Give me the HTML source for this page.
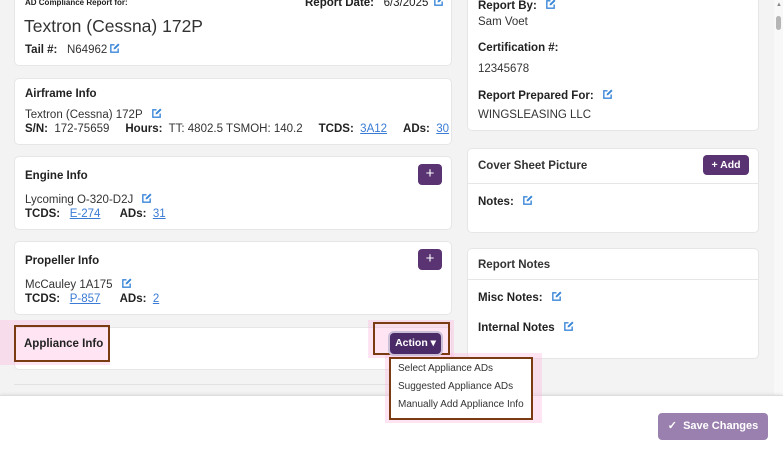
<!DOCTYPE html>
<html><head><meta charset="utf-8"><style>
*{box-sizing:border-box;margin:0;padding:0}
body{width:783px;height:454px;overflow:hidden;background:#f3f3f3;font-family:"Liberation Sans",sans-serif;color:#222;position:relative;font-size:11.5px}
.a{position:absolute}
.card{position:absolute;background:#fff;border-radius:5px;border:1px solid #e6e6e6}
.b{font-weight:bold;color:#222}
.t{color:#333}
.lnk{color:#3a7bd5;text-decoration:underline}
.ed{display:inline-block;width:11px;height:11px;vertical-align:-1px;margin-left:5px}
.plus{position:absolute;width:24px;height:21px;background:#5a3372;border-radius:4px;color:#fff;font-size:15px;text-align:center;line-height:20px}
.hl{position:absolute;background:rgba(255,180,220,0.35);z-index:5}
.bx{position:absolute;border:2px solid #7a3a12;z-index:6}
.z{z-index:7}
</style></head><body>
<svg width="0" height="0" style="position:absolute"><defs><symbol id="e" viewBox="0 0 12 12"><path d="M6 2H2v8h8V6" fill="none" stroke="#3a86d8" stroke-width="1.5"/><path d="M5 7l.3-1.8L10 .5l1.5 1.5L6.8 6.7z" fill="#3a86d8"/></symbol></defs></svg>

<div class="card" style="left:14px;top:-10px;width:438px;height:76px">
<div class="a b" style="left:10px;top:7px;font-size:8px">AD Compliance Report for:</div>
<div class="a b" style="left:290px;top:5px;font-size:11.5px">Report Date:&nbsp;&nbsp;&nbsp;<span style="font-weight:normal">6/3/2025</span><svg class="ed"><use href="#e"/></svg></div>
<div class="a" style="left:9px;top:25px;font-size:17.5px;color:#333">Textron (Cessna) 172P</div>
<div class="a" style="left:10px;top:52px"><span class="b">Tail #:</span>&nbsp;&nbsp; <span class="t">N64962</span><svg class="ed" style="margin-left:2px"><use href="#e"/></svg></div>
</div>

<div class="card" style="left:14px;top:78px;width:438px;height:67px">
<div class="a b" style="left:10px;top:9px">Airframe Info</div>
<div class="a t" style="left:10px;top:29px">Textron (Cessna) 172P <svg class="ed"><use href="#e"/></svg></div>
<div class="a" style="left:10px;top:44px;white-space:nowrap"><span class="b">S/N:</span>&nbsp; <span class="t">172-75659</span>&nbsp;&nbsp;&nbsp;&nbsp; <span class="b">Hours:</span>&nbsp; <span class="t">TT: 4802.5 TSMOH: 140.2</span>&nbsp;&nbsp;&nbsp;&nbsp; <span class="b">TCDS:</span>&nbsp; <span class="lnk">3A12</span>&nbsp;&nbsp;&nbsp;&nbsp; <span class="b">ADs:</span>&nbsp; <span class="lnk">30</span></div>
</div>

<div class="card" style="left:14px;top:156px;width:438px;height:74px">
<div class="a b" style="left:10px;top:13px">Engine Info</div>
<div class="plus" style="left:403px;top:7px">+</div>
<div class="a t" style="left:10px;top:36px">Lycoming O-320-D2J <svg class="ed"><use href="#e"/></svg></div>
<div class="a" style="left:10px;top:51px"><span class="b">TCDS:</span>&nbsp;&nbsp; <span class="lnk">E-274</span>&nbsp;&nbsp;&nbsp;&nbsp;&nbsp; <span class="b">ADs:</span>&nbsp; <span class="lnk">31</span></div>
</div>

<div class="card" style="left:14px;top:241px;width:438px;height:74px">
<div class="a b" style="left:10px;top:13px">Propeller Info</div>
<div class="plus" style="left:403px;top:7px">+</div>
<div class="a t" style="left:10px;top:36px">McCauley 1A175 <svg class="ed"><use href="#e"/></svg></div>
<div class="a" style="left:10px;top:51px"><span class="b">TCDS:</span>&nbsp;&nbsp; <span class="lnk">P-857</span>&nbsp;&nbsp;&nbsp;&nbsp;&nbsp; <span class="b">ADs:</span>&nbsp; <span class="lnk">2</span></div>
</div>

<div class="card" style="left:14px;top:327px;width:438px;height:43px"></div>
<div class="a" style="left:14px;top:384px;width:438px;height:1px;background:#e2e2e2"></div>

<div class="hl" style="left:0;top:320px;width:110px;height:45px"></div>
<div class="hl" style="left:368px;top:320px;width:86px;height:38px"></div>
<div class="hl" style="left:385px;top:353px;width:157px;height:70px"></div>
<div class="bx" style="left:14px;top:325px;width:96px;height:37px"></div>
<div class="a b z" style="left:24px;top:338px">Appliance Info</div>
<div class="bx" style="left:373px;top:322px;width:77px;height:33px"></div>
<div class="a z" style="left:390px;top:333px;width:51px;height:21px;background:#4b2a68;border-radius:4px;color:#fff;font-weight:bold;font-size:10.5px;line-height:21px;text-align:center;box-shadow:0 0 0 2px #cbbfd8">Action ▾</div>
<div class="bx" style="left:389px;top:357px;width:144px;height:63px;background:#fff"></div>
<div class="a t z" style="left:398px;top:360px;font-size:10px;line-height:18px">Select Appliance ADs<br>Suggested Appliance ADs<br>Manually Add Appliance Info</div>

<div class="card" style="left:467px;top:-10px;width:292px;height:141px">
<div class="a b" style="left:10px;top:8px">Report By: <svg class="ed"><use href="#e"/></svg></div>
<div class="a t" style="left:10px;top:25px">Sam Voet</div>
<div class="a b" style="left:10px;top:51px">Certification #:</div>
<div class="a t" style="left:10px;top:72px">12345678</div>
<div class="a b" style="left:10px;top:98px">Report Prepared For: <svg class="ed"><use href="#e"/></svg></div>
<div class="a t" style="left:10px;top:118px">WINGSLEASING LLC</div>
</div>

<div class="card" style="left:467px;top:148px;width:292px;height:85px">
<div class="a t" style="left:10px;top:11px;font-weight:bold">Cover Sheet Picture</div>
<div class="a" style="left:235px;top:6px;width:46px;height:20px;background:#5a3372;border-radius:4px;color:#fff;font-weight:bold;font-size:10.5px;line-height:20px;text-align:center">+ Add</div>
<div class="a" style="left:0;top:34px;width:290px;height:1px;background:#e6e6e6"></div>
<div class="a b" style="left:10px;top:46px">Notes: <svg class="ed"><use href="#e"/></svg></div>
</div>

<div class="card" style="left:467px;top:248px;width:292px;height:111px">
<div class="a t" style="left:10px;top:10px;font-weight:bold">Report Notes</div>
<div class="a" style="left:0;top:30px;width:290px;height:1px;background:#e6e6e6"></div>
<div class="a b" style="left:10px;top:42px">Misc Notes: <svg class="ed"><use href="#e"/></svg></div>
<div class="a b" style="left:10px;top:72px">Internal Notes <svg class="ed"><use href="#e"/></svg></div>
</div>

<div class="a" style="left:774px;top:0;width:9px;height:395px;background:#f8f8f8"></div>
<div class="a" style="left:776px;top:16px;width:5px;height:14px;background:#b5b5b5;border-radius:3px"></div>
<div class="a" style="left:776px;top:2px;font-size:6px;color:#888">▲</div>

<div class="a" style="left:0;top:395px;width:783px;height:59px;background:#fff;border-top:1px solid #ddd;box-shadow:0 -1px 3px rgba(0,0,0,0.08)"></div>
<div class="a" style="left:658px;top:413px;width:110px;height:27px;background:#9a80ae;border-radius:4px;color:#fff;font-weight:bold;font-size:11px;line-height:27px;text-align:center">✓&nbsp; Save Changes</div>
</body></html>
